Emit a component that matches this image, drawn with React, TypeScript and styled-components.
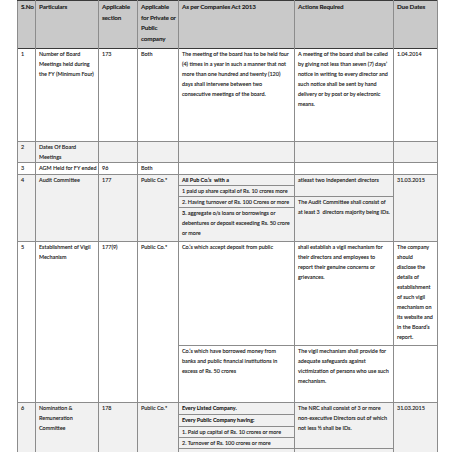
import React from 'react'
import styled, { createGlobalStyle } from 'styled-components'

const GlobalStyle = createGlobalStyle`
	html, body {
		margin: 0;
		padding: 0;
		background: #fff;
		overflow: hidden;
	}
	body {
		font-family: Lato, 'Liberation Sans', sans-serif;
	}
`

const Page = styled.div`
	width: 452px;
	height: 452px;
	overflow: hidden;
	box-sizing: border-box;
	padding-left: 17px;
`

const Sheet = styled.table`
	border-collapse: collapse;
	table-layout: fixed;
	width: 420px;
	font-size: 5.45px;
	font-weight: 500;
	line-height: 10px;
	color: #141414;
	-webkit-text-stroke: 0.08px #141414;
	border-top: 1.5px solid #3a3a3a;
`

type Tone = 'head' | 'shade' | 'plain'

const tones: Record<Tone, string> = {
	head: '#c9c9c9',
	shade: '#f1f1f1',
	plain: '#ffffff'
}

const Row = styled.tr<{ $h: number; $tone?: Tone; $major?: boolean }>`
	height: ${p => p.$h}px;
	background: ${p => tones[p.$tone || 'plain']};
	& > td,
	& > th {
		border-top: ${p => (p.$major ? '1.5px solid #3a3a3a' : '1px solid #8c8c8c')};
	}
`

const Head = styled.th`
	border-left: 1px solid #8c8c8c;
	border-right: 1px solid #8c8c8c;
	padding: 1px 3px 0;
	vertical-align: top;
	text-align: left;
	font-weight: 700;
	font-size: 6.3px;
	letter-spacing: -0.15px;
	line-height: 10.5px;
	color: #1c1c1c;
	white-space: nowrap;
	overflow: hidden;
`

const Cell = styled.td<{ $bold?: boolean }>`
	border-left: 1px solid #8c8c8c;
	border-right: 1px solid #8c8c8c;
	border-bottom: 1px solid #8c8c8c;
	padding: 0 3px;
	vertical-align: top;
	white-space: nowrap;
	overflow: hidden;
	font-weight: ${p => (p.$bold ? 700 : 500)};
`

const B = styled.b`
	font-weight: 700;
`

export default function App() {
	return (
		<Page>
			<GlobalStyle />
			<Sheet>
				<colgroup>
					<col style={{ width: 18 }} />
					<col style={{ width: 63 }} />
					<col style={{ width: 39 }} />
					<col style={{ width: 41 }} />
					<col style={{ width: 116 }} />
					<col style={{ width: 99 }} />
					<col style={{ width: 44 }} />
				</colgroup>
				<tbody>
					<Row $h={48} $tone='head' $major>
						<Head>S.No</Head>
						<Head>Particulars</Head>
						<Head>
							Applicable
							<br />
							section
						</Head>
						<Head>
							Applicable
							<br />
							for Private or
							<br />
							Public
							<br />
							company
						</Head>
						<Head>As per Companies Act 2013</Head>
						<Head>Actions Required</Head>
						<Head>Due Dates</Head>
					</Row>

					<Row $h={93} $major>
						<Cell>1</Cell>
						<Cell>
							Number of Board
							<br />
							Meetings held during
							<br />
							the FY (Minimum Four)
						</Cell>
						<Cell>173</Cell>
						<Cell>Both</Cell>
						<Cell>
							The meeting of the board has to be held four
							<br />
							(4) times in a year in such a manner that not
							<br />
							more than one hundred and twenty (120)
							<br />
							days shall intervene between two
							<br />
							consecutive meetings of the board.
						</Cell>
						<Cell>
							A meeting of the board shall be called
							<br />
							by giving not less than seven (7) days’
							<br />
							notice in writing to every director and
							<br />
							such notice shall be sent by hand
							<br />
							delivery or by post or by electronic
							<br />
							means.
						</Cell>
						<Cell>1.04.2014</Cell>
					</Row>

					<Row $h={21} $tone='shade' $major>
						<Cell>2</Cell>
						<Cell>
							Dates Of Board
							<br />
							Meetings
						</Cell>
						<Cell />
						<Cell />
						<Cell />
						<Cell />
						<Cell />
					</Row>

					<Row $h={12} $major>
						<Cell>3</Cell>
						<Cell>AGM Held for FY ended</Cell>
						<Cell>96</Cell>
						<Cell>Both</Cell>
						<Cell />
						<Cell />
						<Cell />
					</Row>

					<Row $h={10} $tone='shade' $major>
						<Cell rowSpan={4}>4</Cell>
						<Cell rowSpan={4}>Audit Committee</Cell>
						<Cell rowSpan={4}>177</Cell>
						<Cell rowSpan={4}>Public Co.*</Cell>
						<Cell $bold>All Pub Co.’s&nbsp; with a</Cell>
						<Cell rowSpan={2}>atleast two Independent directors</Cell>
						<Cell rowSpan={4}>31.03.2015</Cell>
					</Row>
					<Row $h={10.5} $tone='shade'>
						<Cell>1 paid up share capital of Rs. 10 crores more</Cell>
					</Row>
					<Row $h={10} $tone='shade'>
						<Cell>2. Having turnover of Rs. 100 Crores or more</Cell>
						<Cell rowSpan={2}>
							The Audit Committee shall consist of
							<br />
							at least 3&nbsp; directors majority being IDs.
						</Cell>
					</Row>
					<Row $h={33.5} $tone='shade'>
						<Cell>
							<B>3.</B> aggregate o/s loans or borrowings or
							<br />
							debentures or deposit exceeding Rs. 50 crore
							<br />
							or more
						</Cell>
					</Row>

					<Row $h={104} $major>
						<Cell rowSpan={2}>5</Cell>
						<Cell rowSpan={2}>
							Establishment of Vigil
							<br />
							Mechanism
						</Cell>
						<Cell rowSpan={2}>177(9)</Cell>
						<Cell rowSpan={2}>Public Co.*</Cell>
						<Cell>Co.’s which accept deposit from public</Cell>
						<Cell>
							shall establish a vigil mechanism for
							<br />
							their directors and employees to
							<br />
							report their genuine concerns or
							<br />
							grievances.
						</Cell>
						<Cell>
							The company
							<br />
							should
							<br />
							disclose the
							<br />
							details of
							<br />
							establishment
							<br />
							of such vigil
							<br />
							mechanism on
							<br />
							its website and
							<br />
							in the Board’s
							<br />
							report.
						</Cell>
					</Row>
					<Row $h={57}>
						<Cell>
							Co.’s which have borrowed money from
							<br />
							banks and public financial institutions in
							<br />
							excess of Rs. 50 crores
						</Cell>
						<Cell>
							The vigil mechanism shall provide for
							<br />
							adequate safeguards against
							<br />
							victimization of persons who use such
							<br />
							mechanism.
						</Cell>
						<Cell />
					</Row>

					<Row $h={12} $tone='shade' $major>
						<Cell rowSpan={5}>6</Cell>
						<Cell rowSpan={5}>
							Nomination &amp;
							<br />
							Remuneration
							<br />
							Committee
						</Cell>
						<Cell rowSpan={5}>178</Cell>
						<Cell rowSpan={5}>Public Co.*</Cell>
						<Cell $bold>Every Listed Company.</Cell>
						<Cell rowSpan={4}>
							The NRC shall consist of 3 or more
							<br />
							non-executive Directors out of which
							<br />
							not less ½ shall be IDs.
						</Cell>
						<Cell rowSpan={5}>31.03.2015</Cell>
					</Row>
					<Row $h={12} $tone='shade'>
						<Cell $bold>Every Public Company having:</Cell>
					</Row>
					<Row $h={11} $tone='shade'>
						<Cell>1. Paid up capital of Rs. 10 crores or more</Cell>
					</Row>
					<Row $h={11} $tone='shade'>
						<Cell>2. Turnover of Rs. 100 crores or more</Cell>
					</Row>
					<Row $h={22} $tone='shade'>
						<Cell>3. Aggregate o/s loans or borrowed money</Cell>
						<Cell>atleast two independent directors</Cell>
					</Row>
				</tbody>
			</Sheet>
		</Page>
	)
}
